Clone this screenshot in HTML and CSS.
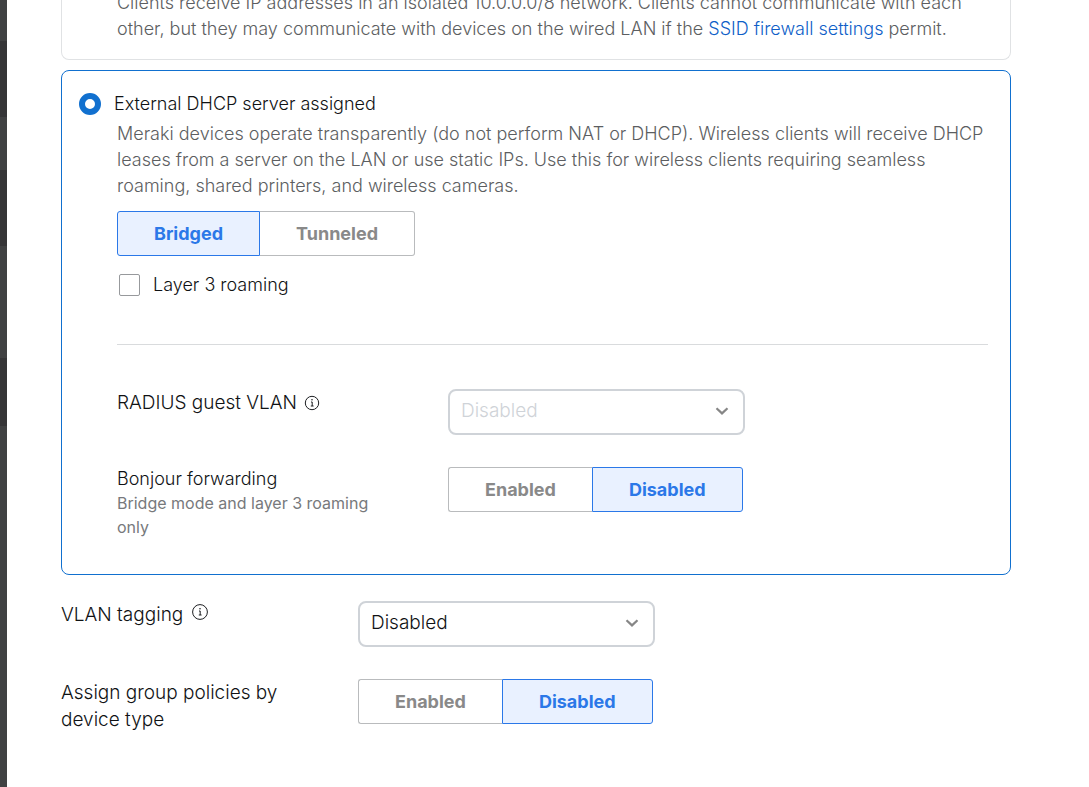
FILE: index.html
```html
<!DOCTYPE html>
<html lang="en">
  <head>
    <title>Access control</title>
    <meta charset="utf-8">
    <link rel="stylesheet" href="styles.css">
  </head>
  <body>

  <div class="sidebar"></div>

  <main class="content">

    <section class="card card-clipped">
      <p class="card-body description">Clients receive IP addresses in an isolated 10.0.0.0/8 network. Clients cannot communicate with each other, but they may communicate with devices on the wired LAN if the <a href="#">SSID firewall settings</a> permit.</p>
    </section>

    <section class="card card-selected">
      <div class="card-title">
        <input type="radio" class="radio" id="external-dhcp" name="ip-assignment" checked>
        <label for="external-dhcp">External DHCP server assigned</label>
      </div>

      <div class="card-body">
        <p class="description">Meraki devices operate transparently (do not perform NAT or DHCP). Wireless clients will receive DHCP leases from a server on the LAN or use static IPs. Use this for wireless clients requiring seamless roaming, shared printers, and wireless cameras.</p>

        <div class="segmented">
          <button type="button" class="active" aria-pressed="true">Bridged</button>
          <button type="button" aria-pressed="false">Tunneled</button>
        </div>

        <div class="check">
          <input type="checkbox" class="checkbox" id="l3-roaming">
          <label for="l3-roaming">Layer 3 roaming</label>
        </div>

        <hr class="divider">

        <div class="row">
          <div class="row-label">
            <label for="guest-vlan">RADIUS guest VLAN</label>
            <svg class="info" viewBox="0 0 16 16" aria-hidden="true">
              <circle cx="8" cy="8" r="6.7"/>
              <path d="M7 7h1.2v4M6.8 11h2.8"/>
              <circle class="dot" cx="8" cy="4.8" r=".8"/>
            </svg>
          </div>
          <div class="select">
            <select id="guest-vlan" disabled><option>Disabled</option></select>
            <svg class="chevron" viewBox="0 0 14 8" aria-hidden="true"><path d="M1.5 1.2L7 6.4l5.5-5.2"/></svg>
          </div>
        </div>

        <div class="row">
          <div class="row-label row-label-small" id="bonjour">
            Bonjour forwarding
            <small>Bridge mode and layer 3 roaming only</small>
          </div>
          <div class="segmented" role="group" aria-labelledby="bonjour">
            <button type="button" aria-pressed="false">Enabled</button>
            <button type="button" class="active" aria-pressed="true">Disabled</button>
          </div>
        </div>
      </div>
    </section>

    <section class="settings">
      <div class="row">
        <div class="row-label">
          <label for="vlan-tagging">VLAN tagging</label>
          <svg class="info info-raised" viewBox="0 0 16 16" aria-hidden="true">
            <circle cx="8" cy="8" r="7.4"/>
            <path d="M7 7h1.2v4M6.8 11h2.8"/>
            <circle class="dot" cx="8" cy="4.8" r=".8"/>
          </svg>
        </div>
        <div class="select">
          <select id="vlan-tagging"><option>Disabled</option><option>Enabled</option></select>
          <svg class="chevron" viewBox="0 0 14 8" aria-hidden="true"><path d="M1.5 1.2L7 6.4l5.5-5.2"/></svg>
        </div>
      </div>

      <div class="row">
        <div class="row-label" id="group-policies">Assign group policies by device type</div>
        <div class="segmented" role="group" aria-labelledby="group-policies">
          <button type="button" aria-pressed="false">Enabled</button>
          <button type="button" class="active" aria-pressed="true">Disabled</button>
        </div>
      </div>
    </section>

  </main>

  </body>
</html>
```
FILE: styles.css
```css
* {
  box-sizing: border-box;
}
body {
  margin: 0;
  display: flex;
  min-height: 100vh;
  background: #fff;
  color: #101214;
  font-family: Inter, "Liberation Sans", sans-serif;
  font-size: 18px;
  font-weight: 300;
  line-height: 26px;
}

a {
  color: #0f5fc8;
  text-decoration: none;
}
a:hover {
  text-decoration: underline;
}

/* edge of the navigation, alternating item shades */
.sidebar {
  flex: none;
  width: 7px;
  background: linear-gradient(#404142 41px, #353537 41px 117px, #404142 117px 170px, #353537 170px 246px, #404142 246px 358px, #353537 358px 426px, #404142 426px);
}

.content {
  flex: 1;
  padding: 0 78px 40px 54px;
}

.card {
  border: 1px solid #e0e2e4;
  border-radius: 8px;
  padding: 20px 22px 35px 17px;
}
.card-clipped {
  margin-top: -10px;
  border-top: 0;
  border-radius: 0 0 8px 8px;
  padding-top: 0;
  padding-bottom: 17px;
}
.card-selected {
  margin-top: 10px;
  border-color: #1170cf;
}

.card-title {
  display: flex;
  align-items: center;
  gap: 13px;
}
.card-body {
  padding-left: 38px;
}

.description {
  margin: 0;
  color: #5c5e61;
}
.card-title + .card-body {
  margin-top: 4px;
}

.radio {
  appearance: none;
  width: 22px;
  height: 22px;
  margin: 0;
  border: 1px solid #8c8f92;
  border-radius: 50%;
}
.radio:checked {
  border: 6px solid #1170cf;
}

.checkbox {
  appearance: none;
  width: 21px;
  height: 22px;
  margin: 0;
  border: 1px solid #97999c;
  border-radius: 2px;
}
.check {
  display: flex;
  align-items: center;
  gap: 13px;
  margin-top: 16px;
  padding-left: 2px;
}

.segmented {
  display: flex;
}
.description + .segmented {
  margin-top: 12px;
}
.segmented button {
  height: 45px;
  padding: 0 36px;
  border: 1px solid #b9bbbd;
  background: #fff;
  color: #898989;
  font: 700 18px Inter, "Liberation Sans", sans-serif;
}
.segmented button:first-child {
  border-right: 0;
  border-radius: 3px 0 0 3px;
}
.segmented button:last-child {
  border-left: 0;
  border-radius: 0 3px 3px 0;
}
.segmented button.active {
  border: 1px solid #2b78e8;
  background: #e9f1ff;
  color: #2b78e8;
}

.divider {
  margin: 46px 0 44px;
  border: 0;
  border-top: 1px solid #d9dbdd;
}

.row {
  display: grid;
  grid-template-columns: 275px 297px;
  column-gap: 56px;
  justify-items: start;
}
.row + .row {
  margin-top: 32px;
}
.settings {
  margin-top: 26px;
}
.settings .row {
  grid-template-columns: 241px 297px;
}

.row-label {
  font-size: 19px;
  line-height: 27px;
}
.row-label-small {
  font-size: 18px;
  line-height: 24px;
}
.row-label small {
  display: block;
  color: #77797c;
  font-size: 16px;
  font-weight: 400;
}

.info {
  width: 16px;
  height: 16px;
  margin-left: 2px;
  vertical-align: -2px;
  fill: none;
  stroke: #1c1e21;
  stroke-width: 1;
}
.info-raised {
  margin-left: 3px;
  vertical-align: 1px;
}
.info .dot {
  fill: #1c1e21;
  stroke: none;
}

.select {
  position: relative;
  width: 100%;
}
.select select {
  appearance: none;
  display: block;
  width: 100%;
  height: 46px;
  padding: 0 36px 3px 11px;
  border: 2px solid #cfd3d8;
  border-radius: 8px;
  background: #fff;
  color: #101214;
  font: 300 19px Inter, "Liberation Sans", sans-serif;
}
.select select:disabled {
  color: #cfd3d8;
  opacity: 1;
}
.chevron {
  position: absolute;
  top: 18px;
  right: 16px;
  width: 14px;
  height: 8px;
  fill: none;
  stroke: #868686;
  stroke-width: 2.2;
  pointer-events: none;
}
```
